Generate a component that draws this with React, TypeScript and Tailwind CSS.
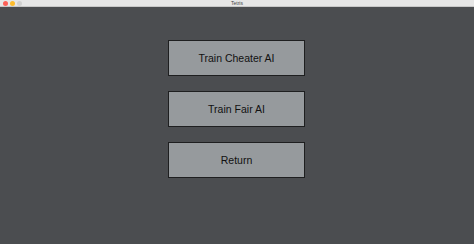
export default function App() {
  const buttons = ["Train Cheater AI", "Train Fair AI", "Return"];
  return (
    <div className="w-[474px] h-[244px] flex flex-col bg-[#4b4d50] font-['Liberation_Sans',Arial,sans-serif]">
      {/* title bar */}
      <div className="h-[7px] bg-[#e6e6e6] border-b border-[#c8c8c8] flex items-center relative">
        <div className="flex gap-[2px] pl-[3px]">
          <span className="w-[5px] h-[5px] rounded-full bg-[#fc5f57]" />
          <span className="w-[5px] h-[5px] rounded-full bg-[#fdbc2e]" />
          <span className="w-[5px] h-[5px] rounded-full bg-[#d0d0d0]" />
        </div>
        <span className="absolute left-1/2 -translate-x-1/2 text-[5px] leading-none text-[#444]">Tetris</span>
      </div>
      <div className="flex flex-col pt-[33px] pl-[168px] gap-[15px]">
        {buttons.map((b) => (
          <button
            key={b}
            className="w-[137px] h-[36px] bg-[#969a9d] border border-[#1e1f20] text-[10.5px] text-[#111] flex items-center justify-center pt-px"
          >
            {b}
          </button>
        ))}
      </div>
    </div>
  );
}
